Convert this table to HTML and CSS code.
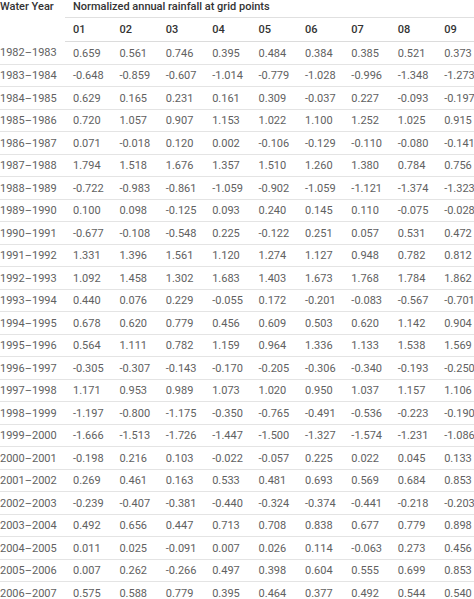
FILE: index.html
```html
<!DOCTYPE html>
<html>
<head>
<meta charset="utf-8">
<link rel="stylesheet" href="styles.css">
</head>
<body>
<table class="rain">
<colgroup>
<col class="c-year"><col class="c-val"><col class="c-val"><col class="c-val"><col class="c-val"><col class="c-val"><col class="c-val"><col class="c-val"><col class="c-val"><col class="c-val">
</colgroup>
<thead>
<tr class="h1"><th rowspan="2" class="year">Water Year</th><th colspan="9" class="group">Normalized annual rainfall at grid points</th></tr>
<tr class="h2"><th>01</th><th>02</th><th>03</th><th>04</th><th>05</th><th>06</th><th>07</th><th>08</th><th>09</th></tr>
</thead>
<tbody>
<tr><td class="year">1982–1983</td><td>0.659</td><td>0.561</td><td>0.746</td><td>0.395</td><td>0.484</td><td>0.384</td><td>0.385</td><td>0.521</td><td>0.373</td></tr>
<tr><td class="year">1983–1984</td><td>-0.648</td><td>-0.859</td><td>-0.607</td><td>-1.014</td><td>-0.779</td><td>-1.028</td><td>-0.996</td><td>-1.348</td><td>-1.273</td></tr>
<tr><td class="year">1984–1985</td><td>0.629</td><td>0.165</td><td>0.231</td><td>0.161</td><td>0.309</td><td>-0.037</td><td>0.227</td><td>-0.093</td><td>-0.197</td></tr>
<tr><td class="year">1985–1986</td><td>0.720</td><td>1.057</td><td>0.907</td><td>1.153</td><td>1.022</td><td>1.100</td><td>1.252</td><td>1.025</td><td>0.915</td></tr>
<tr><td class="year">1986–1987</td><td>0.071</td><td>-0.018</td><td>0.120</td><td>0.002</td><td>-0.106</td><td>-0.129</td><td>-0.110</td><td>-0.080</td><td>-0.141</td></tr>
<tr><td class="year">1987–1988</td><td>1.794</td><td>1.518</td><td>1.676</td><td>1.357</td><td>1.510</td><td>1.260</td><td>1.380</td><td>0.784</td><td>0.756</td></tr>
<tr><td class="year">1988–1989</td><td>-0.722</td><td>-0.983</td><td>-0.861</td><td>-1.059</td><td>-0.902</td><td>-1.059</td><td>-1.121</td><td>-1.374</td><td>-1.323</td></tr>
<tr><td class="year">1989–1990</td><td>0.100</td><td>0.098</td><td>-0.125</td><td>0.093</td><td>0.240</td><td>0.145</td><td>0.110</td><td>-0.075</td><td>-0.028</td></tr>
<tr><td class="year">1990–1991</td><td>-0.677</td><td>-0.108</td><td>-0.548</td><td>0.225</td><td>-0.122</td><td>0.251</td><td>0.057</td><td>0.531</td><td>0.472</td></tr>
<tr><td class="year">1991–1992</td><td>1.331</td><td>1.396</td><td>1.561</td><td>1.120</td><td>1.274</td><td>1.127</td><td>0.948</td><td>0.782</td><td>0.812</td></tr>
<tr><td class="year">1992–1993</td><td>1.092</td><td>1.458</td><td>1.302</td><td>1.683</td><td>1.403</td><td>1.673</td><td>1.768</td><td>1.784</td><td>1.862</td></tr>
<tr><td class="year">1993–1994</td><td>0.440</td><td>0.076</td><td>0.229</td><td>-0.055</td><td>0.172</td><td>-0.201</td><td>-0.083</td><td>-0.567</td><td>-0.701</td></tr>
<tr><td class="year">1994–1995</td><td>0.678</td><td>0.620</td><td>0.779</td><td>0.456</td><td>0.609</td><td>0.503</td><td>0.620</td><td>1.142</td><td>0.904</td></tr>
<tr><td class="year">1995–1996</td><td>0.564</td><td>1.111</td><td>0.782</td><td>1.159</td><td>0.964</td><td>1.336</td><td>1.133</td><td>1.538</td><td>1.569</td></tr>
<tr><td class="year">1996–1997</td><td>-0.305</td><td>-0.307</td><td>-0.143</td><td>-0.170</td><td>-0.205</td><td>-0.306</td><td>-0.340</td><td>-0.193</td><td>-0.250</td></tr>
<tr><td class="year">1997–1998</td><td>1.171</td><td>0.953</td><td>0.989</td><td>1.073</td><td>1.020</td><td>0.950</td><td>1.037</td><td>1.157</td><td>1.106</td></tr>
<tr><td class="year">1998–1999</td><td>-1.197</td><td>-0.800</td><td>-1.175</td><td>-0.350</td><td>-0.765</td><td>-0.491</td><td>-0.536</td><td>-0.223</td><td>-0.190</td></tr>
<tr><td class="year">1999–2000</td><td>-1.666</td><td>-1.513</td><td>-1.726</td><td>-1.447</td><td>-1.500</td><td>-1.327</td><td>-1.574</td><td>-1.231</td><td>-1.086</td></tr>
<tr><td class="year">2000–2001</td><td>-0.198</td><td>0.216</td><td>0.103</td><td>-0.022</td><td>-0.057</td><td>0.225</td><td>0.022</td><td>0.045</td><td>0.133</td></tr>
<tr><td class="year">2001–2002</td><td>0.269</td><td>0.461</td><td>0.163</td><td>0.533</td><td>0.481</td><td>0.693</td><td>0.569</td><td>0.684</td><td>0.853</td></tr>
<tr><td class="year">2002–2003</td><td>-0.239</td><td>-0.407</td><td>-0.381</td><td>-0.440</td><td>-0.324</td><td>-0.374</td><td>-0.441</td><td>-0.218</td><td>-0.203</td></tr>
<tr><td class="year">2003–2004</td><td>0.492</td><td>0.656</td><td>0.447</td><td>0.713</td><td>0.708</td><td>0.838</td><td>0.677</td><td>0.779</td><td>0.898</td></tr>
<tr><td class="year">2004–2005</td><td>0.011</td><td>0.025</td><td>-0.091</td><td>0.007</td><td>0.026</td><td>0.114</td><td>-0.063</td><td>0.273</td><td>0.456</td></tr>
<tr><td class="year">2005–2006</td><td>0.007</td><td>0.262</td><td>-0.266</td><td>0.497</td><td>0.398</td><td>0.604</td><td>0.555</td><td>0.699</td><td>0.853</td></tr>
<tr><td class="year">2006–2007</td><td>0.575</td><td>0.588</td><td>0.779</td><td>0.395</td><td>0.464</td><td>0.377</td><td>0.492</td><td>0.544</td><td>0.540</td></tr>
</tbody>
</table>
</body>
</html>
```

FILE: styles.css
```css
html, body {
  margin: 0;
  padding: 0;
  background: #fff;
  overflow: hidden;
}
body {
  font-family: Roboto, "Liberation Sans", sans-serif;
  font-size: 11px;
  color: #616161;
}
.rain {
  border-collapse: collapse;
  table-layout: fixed;
  width: 482.6px;
}
.c-year { width: 65px; }
.c-val { width: 46.4px; }
.rain th, .rain td {
  text-align: left;
  padding: 0 0 0 8px;
  white-space: nowrap;
  line-height: 13px;
}
.rain th {
  font-weight: 500;
  color: #333;
}
.rain .year {
  padding-left: 0;
}
.h1 th {
  vertical-align: top;
  height: 17px;
  padding-top: 0;
}
.h1 th.group {
  border-bottom: 1px solid #e0e0e0;
  padding-left: 8px;
}
.h2 th {
  height: 23.4px;
  vertical-align: middle;
  border-bottom: 1px solid #dcdcdc;
}
.rain td {
  height: 21.5px;
  vertical-align: middle;
  border-bottom: 1px solid #e4e4e4;
}
```
